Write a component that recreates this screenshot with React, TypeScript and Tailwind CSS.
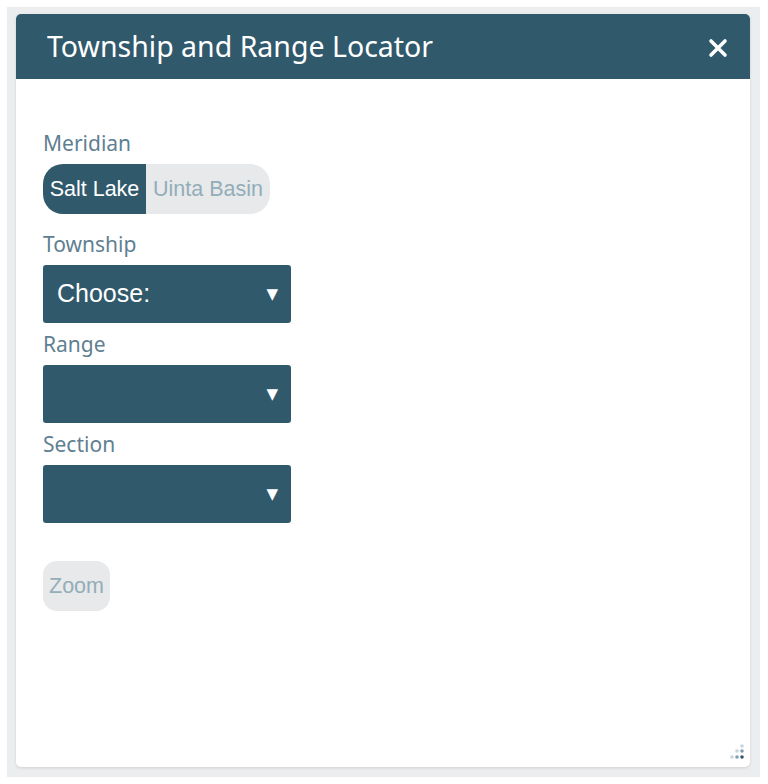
import React from "react";

const labelCls =
  "block text-[21px] leading-[26px] text-[#5f8091] pt-[8px] pb-[8px]";

function Select({ value }: { value?: string }) {
  return (
    <div className="flex h-[58px] w-[248px] items-center justify-between rounded-[3px] bg-[#30596c] pl-[14px] pr-[13px]">
      <span className="text-[25px] text-white [font-family:'Liberation_Sans',Arial,sans-serif]">
        {value ?? ""}
      </span>
      <span className="text-[15px] text-white [font-family:'DejaVu_Sans',sans-serif]">▼</span>
    </div>
  );
}

export default function App() {
  return (
    <div className="h-[784px] w-[768px] bg-white pl-[7px] pt-[7px]">
      <div className="h-[770px] w-[753px] bg-[#ecedee] pl-[9px] pt-[7px]">
        <div className="flex h-[753px] w-[734px] flex-col overflow-hidden rounded-[5px] bg-white shadow-[0_1px_3px_rgba(0,0,0,0.12)] [font-family:'Noto_Sans','Lato',sans-serif]">
          <div className="flex h-[65px] shrink-0 items-center justify-between bg-[#30596c] pl-[31px] pr-[22px]">
            <h1 className="text-[28.5px] text-white">Township and Range Locator</h1>
            <svg width="20" height="20" viewBox="0 0 20 20" className="mt-[2px]">
              <path d="M3 3 L17 17 M17 3 L3 17" stroke="white" strokeWidth="3.6" strokeLinecap="round" />
            </svg>
          </div>

          <div className="relative flex-1 pl-[27px] pt-[43px]">
            <span className={labelCls}>Meridian</span>
            <div className="flex h-[50px] w-[227px] overflow-hidden rounded-[20px] text-[21.5px] [font-family:'Liberation_Sans',Arial,sans-serif]">
              <div className="flex w-[103px] items-center justify-center bg-[#30596c] text-white">Salt Lake</div>
              <div className="flex flex-1 items-center justify-center bg-[#e7e9eb] text-[#93adb9]">Uinta Basin</div>
            </div>
            <div className="h-[9px]" />

            <span className={labelCls}>Township</span>
            <Select value="Choose:" />
            <span className={labelCls}>Range</span>
            <Select />
            <span className={labelCls}>Section</span>
            <Select />

            <button className="mt-[38px] flex h-[50px] w-[67px] items-center justify-center rounded-[14px] bg-[#e7e9eb] text-[21.5px] text-[#93adb9] [font-family:'Liberation_Sans',Arial,sans-serif]">
              Zoom
            </button>

            <svg width="18" height="18" viewBox="0 0 18 18" className="absolute bottom-[6px] right-[5px]">
              <circle cx="15" cy="3" r="1.8" fill="#c9d5dc" />
              <circle cx="10" cy="8" r="1.8" fill="#c9d5dc" />
              <circle cx="15" cy="8" r="1.8" fill="#7f9eae" />
              <circle cx="5" cy="14" r="1.8" fill="#c9d5dc" />
              <circle cx="10" cy="14" r="1.8" fill="#7f9eae" />
              <circle cx="15" cy="14" r="1.8" fill="#30596c" />
            </svg>
          </div>
        </div>
      </div>
    </div>
  );
}
